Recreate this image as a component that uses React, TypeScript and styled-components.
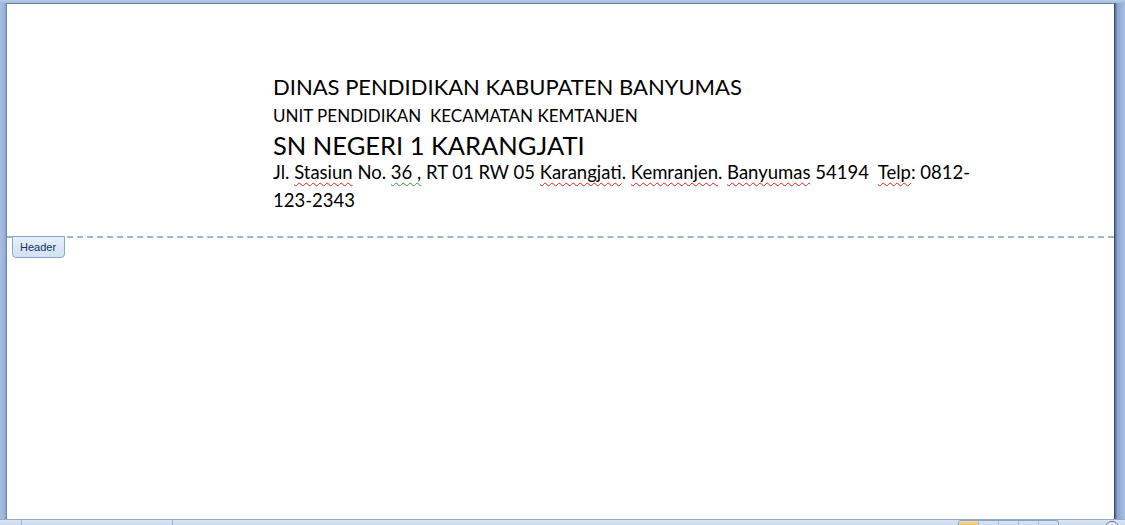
import React from "react";
import styled, { createGlobalStyle } from "styled-components";

const GlobalStyle = createGlobalStyle`
  html, body {
    margin: 0;
    padding: 0;
    overflow: hidden;
  }
  body {
    font-family: Lato, "Open Sans", sans-serif;
  }
`;

const Window = styled.div`
  width: 1125px;
  height: 525px;
  display: grid;
  grid-template-rows: 3px 1fr 6px;
  background: #a9c0e1;
  overflow: hidden;
`;

const TopStrip = styled.div`
  background: linear-gradient(#b9cce8, #a4bbdd);
`;

const Workspace = styled.div`
  display: grid;
  grid-template-columns: 7px 1fr 10px;
  min-height: 0;
`;

const LeftGutter = styled.div`
  background: linear-gradient(90deg, #a8bfe0 0%, #98b1d7 70%, #5f7fae 100%);
`;

const RightGutter = styled.div`
  background: linear-gradient(90deg, #4e6d9a 0%, #8aa5cf 25%, #a9c0e1 100%);
`;

const Page = styled.div`
  background: #ffffff;
  border-top: 1px solid #6d7f99;
  border-right: 1px solid #404a58;
  display: flex;
  flex-direction: column;
  min-height: 0;
`;

const HeaderArea = styled.div`
  height: 234px;
  box-sizing: border-box;
  padding: 69px 0 0 266px;
  border-bottom: 2px dashed #9db5d6;
  color: #000;
`;

const Line = styled.div<{ $size: number; $lh: number }>`
  font-size: ${({ $size }) => $size}px;
  line-height: ${({ $lh }) => $lh}px;
  white-space: nowrap;
`;

const Spell = styled.span<{ $grammar?: boolean }>`
  text-decoration: underline wavy ${({ $grammar }) => ($grammar ? "#2e9a2e" : "#e02020")};
  text-decoration-thickness: 1px;
  text-underline-offset: 3px;
`;

const HeaderTab = styled.div`
  align-self: flex-start;
  margin: -2px 0 0 5px;
  padding: 4px 8px 4px 7px;
  font-family: "Liberation Sans", Arial, sans-serif;
  font-size: 11px;
  color: #15325f;
  background: linear-gradient(#e6eefa, #d3e1f4);
  border: 1px solid #8aa6cc;
  border-radius: 0 0 4px 4px;
`;

const StatusBar = styled.div`
  display: flex;
  align-items: stretch;
  background: linear-gradient(#dbe6f5, #c9daf1);
  border-top: 1px solid #93abcd;
`;

const Segment = styled.div<{ $w: number }>`
  width: ${({ $w }) => $w}px;
  border-right: 1px solid #9fb4d2;
`;

const SpellIcon = styled.span`
  display: block;
  margin: 0 0 0 15px;
  width: 8px;
  height: 5px;
  color: #d8503c;
`;

const ViewGroup = styled.div`
  margin-left: auto;
  margin-right: 46px;
  display: flex;
  border: 1px solid #8da6c8;
  border-bottom: none;
  border-radius: 3px 3px 0 0;
`;

const ViewButton = styled.div<{ $active?: boolean }>`
  width: 19px;
  border-right: 1px solid #a9bcd6;
  background: ${({ $active }) => ($active ? "linear-gradient(#f9d9a6, #f4c27a)" : "transparent")};
  &:last-child {
    border-right: none;
  }
`;

const Zoomer = styled.div`
  width: 12px;
  height: 12px;
  border: 1px solid #5c6f8c;
  border-radius: 50%;
  margin: 1px 6px 0 0;
  background: #e8eef7;
`;

export default function App() {
  return (
    <>
      <GlobalStyle />
      <Window>
        <TopStrip />
        <Workspace>
          <LeftGutter />
          <Page>
            <HeaderArea>
              <Line $size={22} $lh={27}>DINAS PENDIDIKAN KABUPATEN BANYUMAS</Line>
              <Line $size={17} $lh={32}>UNIT PENDIDIKAN&nbsp; KECAMATAN KEMTANJEN</Line>
              <Line $size={25.5} $lh={26}>SN NEGERI 1 KARANGJATI</Line>
              <Line $size={18.5} $lh={28}>
                Jl. <Spell>Stasiun</Spell> No. <Spell $grammar>36 ,</Spell> RT 01 RW 05{" "}
                <Spell>Karangjati</Spell>. <Spell>Kemranjen</Spell>. <Spell>Banyumas</Spell> 54194&nbsp;{" "}
                <Spell>Telp</Spell>: 0812-
                <br />
                123-2343
              </Line>
            </HeaderArea>
            <HeaderTab>Header</HeaderTab>
          </Page>
          <RightGutter />
        </Workspace>
        <StatusBar>
          <Segment $w={21} />
          <Segment $w={150}>
            <SpellIcon>
              <svg width="8" height="5" viewBox="0 0 8 5">
                <path d="M1 0 L4 3 L7 0" stroke="currentColor" strokeWidth="1.5" fill="none" />
              </svg>
            </SpellIcon>
          </Segment>
          <ViewGroup>
            <ViewButton $active />
            <ViewButton />
            <ViewButton />
            <ViewButton />
            <ViewButton />
          </ViewGroup>
          <Zoomer />
        </StatusBar>
      </Window>
    </>
  );
}
